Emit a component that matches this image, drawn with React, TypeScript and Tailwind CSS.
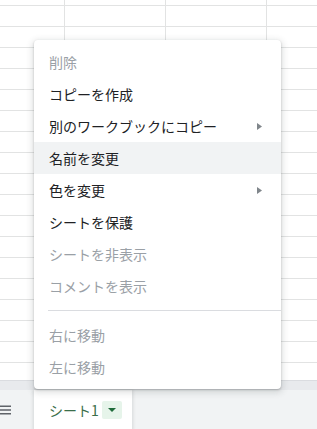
import React from "react";

interface MenuItem {
  label: string;
  disabled?: boolean;
  submenu?: boolean;
  active?: boolean;
}

const GROUP_A: MenuItem[] = [
  { label: "削除", disabled: true },
  { label: "コピーを作成" },
  { label: "別のワークブックにコピー", submenu: true },
  { label: "名前を変更", active: true },
  { label: "色を変更", submenu: true },
  { label: "シートを保護" },
  { label: "シートを非表示", disabled: true },
  { label: "コメントを表示", disabled: true },
];

const GROUP_B: MenuItem[] = [
  { label: "右に移動", disabled: true },
  { label: "左に移動", disabled: true },
];

const ROWS = Array.from({ length: 18 });

function Row({ item }: { item: MenuItem }) {
  return (
    <div
      className={`h-[32px] flex items-center pl-[15px] pr-[19px] text-[14px] leading-none ${
        item.active ? "bg-[#f1f3f4]" : ""
      } ${item.disabled ? "text-[#9aa0a6]" : "text-[#202124]"}`}
    >
      <span>{item.label}</span>
      {item.submenu && (
        <svg className="ml-auto" width="5" height="7" viewBox="0 0 5 7">
          <path d="M0 0 L5 3.5 L0 7 Z" fill="#80868b" />
        </svg>
      )}
    </div>
  );
}

export default function App() {
  return (
    <div
      className="relative w-[317px] h-[429px] overflow-hidden bg-white flex flex-col"
      style={{ fontFamily: '"Noto Sans CJK JP", "Noto Sans", sans-serif' }}
    >
      {/* grid */}
      <div className="h-[380px] overflow-hidden flex flex-col">
        <div className="h-[6px] shrink-0 flex border-b border-[#e2e3e3]">
          <div className="w-[65px] border-r border-[#e2e3e3]" />
          <div className="w-[101px] border-r border-[#e2e3e3]" />
          <div className="w-[101px] border-r border-[#e2e3e3]" />
          <div className="flex-1" />
        </div>
        {ROWS.map((_, i) => (
          <div key={i} className="h-[21px] shrink-0 flex border-b border-[#e2e3e3]">
            <div className="w-[65px] border-r border-[#e2e3e3]" />
            <div className="w-[101px] border-r border-[#e2e3e3]" />
            <div className="w-[101px] border-r border-[#e2e3e3]" />
            <div className="flex-1" />
          </div>
        ))}
      </div>

      {/* scrollbar band */}
      <div className="h-[10px] shrink-0 bg-[#e8eaed] border-t border-[#dadce0]" />

      {/* sheet bar */}
      <div className="flex-1 bg-[#f1f3f4] flex items-stretch">
        <div className="w-[34px] flex items-center">
          <svg className="-ml-[7px]" width="18" height="18" viewBox="0 0 18 18">
            <path d="M0 4.5h18v1.6H0zM0 8.2h18v1.6H0zM0 11.9h18v1.6H0z" fill="#5f6368" />
          </svg>
        </div>
        <div className="w-[98px] bg-white shadow-[0_1px_3px_1px_rgba(60,64,67,0.15)] flex items-center pl-[15px]">
          <span className="text-[14px] leading-none text-[#3b6e4a]">シート1</span>
          <div className="ml-auto mr-[10px] w-[20px] h-[18px] rounded-[2px] bg-[#e6f4ea] flex items-center justify-center">
            <svg width="8" height="4" viewBox="0 0 8 4">
              <path d="M0 0 L8 0 L4 4 Z" fill="#1e6b3a" />
            </svg>
          </div>
        </div>
      </div>

      {/* context menu */}
      <div className="absolute left-[34px] top-[40px] w-[247px] py-[6px] bg-white rounded-[4px] shadow-[0_2px_6px_2px_rgba(60,64,67,0.15),0_1px_2px_0_rgba(60,64,67,0.3)]">
        {GROUP_A.map((item) => (
          <Row key={item.label} item={item} />
        ))}
        <div className="ml-[14px] my-[8px] h-px bg-[#dadce0]" />
        {GROUP_B.map((item) => (
          <Row key={item.label} item={item} />
        ))}
      </div>
    </div>
  );
}
